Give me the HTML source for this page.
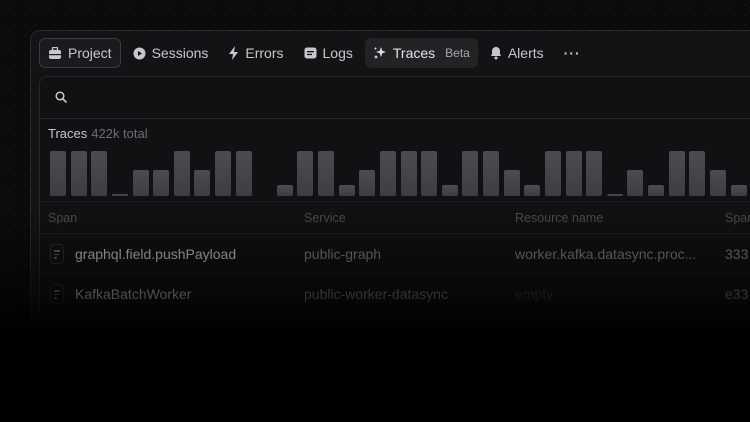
<!DOCTYPE html>
<html style="width:750px;height:422px;overflow:hidden"><head><style>
*{margin:0;padding:0;box-sizing:border-box}
body{width:750px;height:422px;overflow:hidden;background:#0b0b0c;font-family:"Liberation Sans",sans-serif;position:relative;
background-image:radial-gradient(circle,#2a2a2c 0.6px,transparent 0.8px);background-size:10px 10px}
.panel{position:absolute;left:30px;top:30px;width:740px;height:380px;border:1px solid #2a2a2d;border-radius:10px;background:#131315;overflow:hidden}
.nav{position:absolute;top:7px;left:8px;height:30px;display:flex;align-items:center;font-size:14px;color:#c8c8cc}
.tab{display:flex;align-items:center;height:30px;padding:0 8px;border-radius:6px;margin-right:4px;gap:6px}
.tab.act{border:1px solid #3b3b40;background:#1b1b1e}
.tab.tr{background:#232326}
.beta{font-size:12px;color:#a8a8ac;margin-left:4px}
.inner{position:absolute;left:8px;top:45px;width:740px;height:340px;border:1px solid #28282b;border-radius:8px;background:#111113}
.search{height:42px;border-bottom:1px solid #28282b;position:relative}
.lbl{position:absolute;left:8px;top:49px;font-size:13px;color:#c8c8cc}
.lbl span{color:#6e6e72;margin-left:4px}
.bar{position:absolute;width:16px;border-radius:2px;background:linear-gradient(#4c4c50,#3e3e42);bottom:0}
.bars{position:absolute;left:0;top:73px;width:740px;height:46px}
.th{position:absolute;top:124px;left:0;width:740px;height:33px;border-top:1px solid #1e1e20;border-bottom:1px solid #1e1e20;font-size:12.5px;color:#4c4c50}
.row{position:absolute;left:0;width:740px;height:40px;border-bottom:1px solid #1c1c1e;font-size:14px}
.c{position:absolute;top:50%;transform:translateY(-50%);white-space:nowrap}
.ic{position:absolute;left:10px;top:10px;width:14px;height:20px;border:1px solid #2c2c2f;border-radius:4px}
.ic i{position:absolute;left:3px;height:1.5px;background:#5a5a5e}
.fade{position:absolute;left:0;top:0;width:750px;height:422px;background:linear-gradient(180deg,rgba(0,0,0,0) 0px,rgba(0,0,0,0) 210px,rgba(0,0,0,.55) 290px,rgba(0,0,0,.95) 330px,#000 360px);pointer-events:none}
</style></head><body>
<div class="panel">
 <div class="nav">
  <div class="tab act"><svg width="14" height="13" viewBox="0 0 14 13"><rect x="1" y="3" width="12" height="9" rx="2" fill="#c8c8cc"/><rect x="4.5" y="0.5" width="5" height="3" rx="1" fill="none" stroke="#c8c8cc" stroke-width="1.3"/><rect x="1" y="7" width="12" height="1.2" fill="#1b1b1e"/></svg>Project</div>
  <div class="tab"><svg width="13" height="13" viewBox="0 0 13 13"><circle cx="6.5" cy="6.5" r="6" fill="#c8c8cc"/><path d="M5 4l4 2.5L5 9z" fill="#131315"/></svg>Sessions</div>
  <div class="tab"><svg width="11" height="14" viewBox="0 0 11 14"><path d="M7 0L1 8h4l-1 6 6-8H6z" fill="#c8c8cc"/></svg>Errors</div>
  <div class="tab"><svg width="13" height="12" viewBox="0 0 13 12"><rect x="0.5" y="0.5" width="12" height="11" rx="2.5" fill="#c8c8cc"/><rect x="3" y="4" width="7" height="1.3" fill="#131315"/><rect x="3" y="6.8" width="5" height="1.3" fill="#131315"/></svg>Logs</div>
  <div class="tab tr"><svg width="14" height="14" viewBox="0 0 14 14"><path d="M8 1l1.3 3.7L13 6l-3.7 1.3L8 11 6.7 7.3 3 6l3.7-1.3z" fill="#e0e0e4"/><path d="M3 9l.7 1.3L5 11l-1.3.7L3 13l-.7-1.3L1 11l1.3-.7z" fill="#e0e0e4"/><path d="M2.5 1l.5 1 1 .5-1 .5-.5 1-.5-1-1-.5 1-.5z" fill="#e0e0e4"/></svg><span style="color:#e4e4e8">Traces</span><span class="beta">Beta</span></div>
  <div class="tab"><svg width="12" height="14" viewBox="0 0 12 14"><path d="M6 1a4 4 0 0 0-4 4v3L1 10h10L10 8V5a4 4 0 0 0-4-4z" fill="#c8c8cc"/><circle cx="6" cy="12" r="1.5" fill="#c8c8cc"/></svg>Alerts</div>
  <div class="tab" style="font-weight:bold;letter-spacing:1px">···</div>
 </div>
 <div class="inner">
  <div class="search"><svg style="position:absolute;left:15px;top:14px" width="13" height="13" viewBox="0 0 13 13"><circle cx="5" cy="5" r="3.8" fill="none" stroke="#c8c8cc" stroke-width="1.5"/><path d="M8 8l3.5 3.5" stroke="#c8c8cc" stroke-width="1.6"/></svg></div>
  <div class="lbl">Traces<span>422k total</span></div>
  <div class="bars" id="bars"></div>
  <div class="th"><div class="c" style="left:8px">Span</div><div class="c" style="left:264px">Service</div><div class="c" style="left:475px">Resource name</div><div class="c" style="left:685px">Span</div></div>
  <div class="row" style="top:157px;color:#bdbdc1"><div class="ic"><i style="top:5px;width:6px"></i><i style="top:8.5px;width:5px"></i><i style="top:12px;width:3px"></i></div><div class="c" style="left:35px">graphql.field.pushPayload</div><div class="c" style="left:264px;color:#7a7a7e">public-graph</div><div class="c" style="left:475px;color:#7a7a7e">worker.kafka.datasync.proc...</div><div class="c" style="left:685px;color:#7a7a7e">333</div></div>
  <div class="row" style="top:197px;color:#bdbdc1"><div class="ic"><i style="top:5px;width:6px"></i><i style="top:8.5px;width:5px"></i><i style="top:12px;width:3px"></i></div><div class="c" style="left:35px">KafkaBatchWorker</div><div class="c" style="left:264px;color:#7a7a7e">public-worker-datasync</div><div class="c" style="left:475px;color:#3a3a3e">empty</div><div class="c" style="left:685px;color:#7a7a7e">e33</div></div>
 </div>
</div>
<div class="fade"></div>
<script>
var h={T:45,M:26,L:11,t:2,_:0};
var s="TTTtMMTMTT_LTTLMTTTLTTMLTTTtMLTTML";
var b=document.getElementById('bars'),o='';
for(var i=0;i<s.length;i++){var v=h[s[i]];if(!v)continue;o+='<div class="bar" style="left:'+(10+i*20.62).toFixed(1)+'px;height:'+v+'px"></div>';}
b.innerHTML=o;
</script>
</body></html>
